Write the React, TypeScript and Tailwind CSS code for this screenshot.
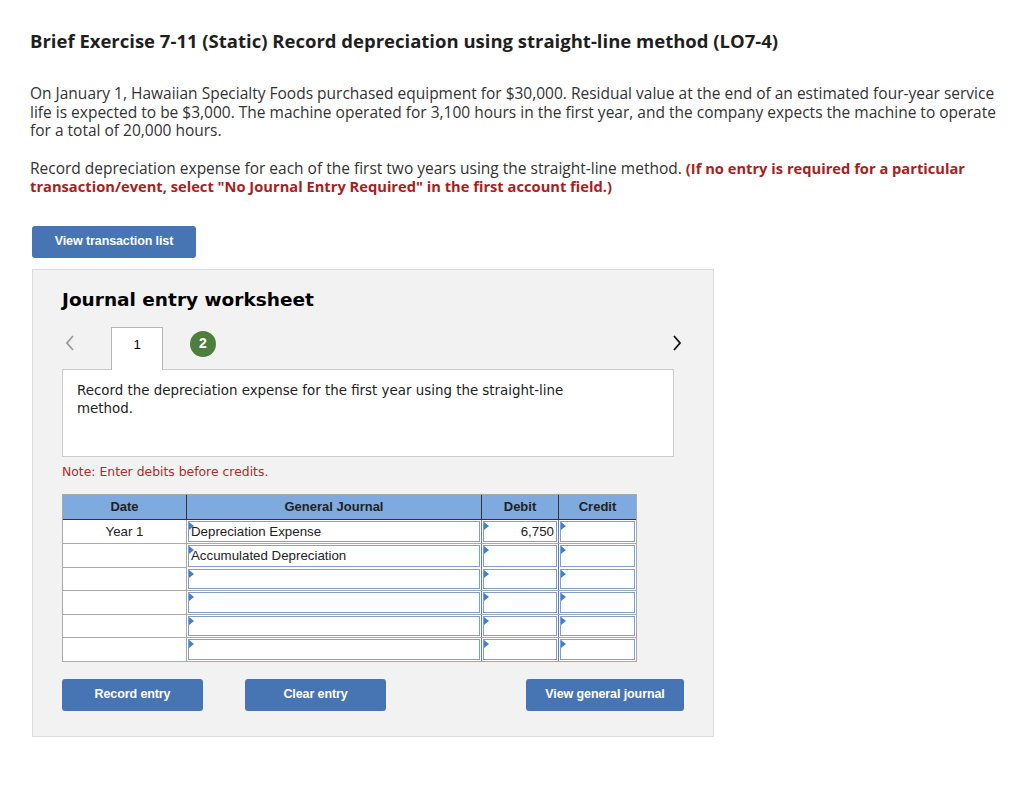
import React from "react"

const rows = [
  { date: "Year 1", account: "Depreciation Expense", debit: "6,750", credit: "" },
  { date: "", account: "Accumulated Depreciation", debit: "", credit: "" },
  { date: "", account: "", debit: "", credit: "" },
  { date: "", account: "", debit: "", credit: "" },
  { date: "", account: "", debit: "", credit: "" },
  { date: "", account: "", debit: "", credit: "" },
]

function InputCell({ value, align = "left" }: { value: string; align?: "left" | "right" }) {
  return (
    <div className="h-full p-[1px] bg-white">
      <div
        className={`relative h-full border border-[#7f9fcf] flex items-center px-[2px] ${
          align === "right" ? "justify-end" : "justify-start"
        }`}
      >
        {/* little blue marker in the corner */}
        <span className="absolute left-0 top-0 w-0 h-0 border-t-[4px] border-b-[4px] border-l-[5px] border-t-transparent border-b-transparent border-l-[#3f7fd6]" />
        <span className="text-[13.3px] text-[#222]">{value}</span>
      </div>
    </div>
  )
}

function BlueButton({ label, width }: { label: string; width: string }) {
  return (
    <button
      className={`${width} h-[32px] rounded-[3px] bg-[#4775b4] text-white text-[12.5px] font-bold tracking-[-0.1px]`}
      style={{ fontFamily: '"Liberation Sans", Arial, sans-serif' }}
    >
      {label}
    </button>
  )
}

export default function App() {
  return (
    <div className="min-h-[793px] bg-white text-[#333]" style={{ fontFamily: '"Open Sans", sans-serif' }}>
      <div className="pl-[30px] pt-[30px]">
        <h1 className="text-[18.5px] leading-[22px] font-bold text-[#1f1f1f]">
          Brief Exercise 7-11 (Static) Record depreciation using straight-line method (LO7-4)
        </h1>

        <p className="mt-[32px] text-[15.5px] leading-[18.5px] text-[#333]">
          On January 1, Hawaiian Specialty Foods purchased equipment for $30,000. Residual value at the end of an estimated four-year service
          <br />
          life is expected to be $3,000. The machine operated for 3,100 hours in the first year, and the company expects the machine to operate
          <br />
          for a total of 20,000 hours.
        </p>

        <p className="mt-[19px] text-[15.5px] leading-[18.5px] text-[#333]">
          Record depreciation expense for each of the first two years using the straight-line method.{" "}
          <span className="font-bold text-[#a81e1e] text-[14.7px]">
            (If no entry is required for a particular
            <br />
            transaction/event, select "No Journal Entry Required" in the first account field.)
          </span>
        </p>
      </div>

      <div className="pl-[32px]">
        <div className="mt-[30px]">
          <BlueButton label="View transaction list" width="w-[164px]" />
        </div>

        <div className="mt-[11px] w-[682px] h-[468px] bg-[#f2f2f2] border border-[#dadada] pl-[29px] pt-[18px]">
          <h2
            className="text-[18.5px] leading-[24px] font-bold text-black"
            style={{ fontFamily: '"DejaVu Sans", Verdana, sans-serif' }}
          >
            Journal entry worksheet
          </h2>

          <div className="mt-[15px] w-[612px] flex items-start">
            <div className="w-[49px] pl-[3px] pt-[8px]">
              <svg width="10" height="16" viewBox="0 0 10 16">
                <path d="M8 1 L2 8 L8 15" fill="none" stroke="#9a9a9a" strokeWidth="1.8" />
              </svg>
            </div>
            <div className="relative z-10 w-[52px] h-[43px] -mb-[1px] bg-white border border-b-0 border-[#b5b5b5] flex justify-center pt-[7px]">
              <span className="text-[13px] text-black" style={{ fontFamily: '"Liberation Sans", Arial, sans-serif' }}>
                1
              </span>
            </div>
            <div
              className="ml-[27px] mt-[4px] w-[26px] h-[26px] rounded-full bg-[#4e7e3d] text-white text-[14px] font-bold flex items-center justify-center"
              style={{ fontFamily: '"Liberation Sans", Arial, sans-serif' }}
            >
              2
            </div>
            <div className="ml-auto -mr-[8px] pt-[8px]">
              <svg width="10" height="16" viewBox="0 0 10 16">
                <path d="M2 1 L8 8 L2 15" fill="none" stroke="#111" strokeWidth="1.8" />
              </svg>
            </div>
          </div>

          <div
            className="w-[612px] h-[88px] bg-white border border-[#cccccc] pl-[14px] pt-[12px] text-[13.4px] leading-[18px] text-[#222]"
            style={{ fontFamily: '"DejaVu Sans", Verdana, sans-serif' }}
          >
            Record the depreciation expense for the first year using the straight-line
            <br />
            method.
          </div>

          <p
            className="mt-[7px] text-[12.4px] leading-[16px] text-[#b22a2a]"
            style={{ fontFamily: '"DejaVu Sans", Verdana, sans-serif' }}
          >
            Note: Enter debits before credits.
          </p>

          <div
            className="mt-[14px] w-[575px] border border-[#a9a9a9] bg-white"
            style={{ fontFamily: '"Liberation Sans", Arial, sans-serif' }}
          >
            <div className="grid grid-cols-[124px_295px_77px_77px] h-[25px] bg-[#7eaadf] border-b border-[#333] text-[13px] font-bold text-[#222]">
              <div className="flex items-center justify-center border-r border-[#333]">Date</div>
              <div className="flex items-center justify-center border-r border-[#333]">General Journal</div>
              <div className="flex items-center justify-center border-r border-[#333]">Debit</div>
              <div className="flex items-center justify-center">Credit</div>
            </div>
            {rows.map((row, i) => (
              <div
                key={i}
                className={`grid grid-cols-[124px_295px_77px_77px] h-[23.5px] ${i > 0 ? "border-t border-[#a9a9a9]" : ""}`}
              >
                <div className="flex items-center justify-center border-r border-[#a9a9a9] text-[13.3px] text-[#222]">
                  {row.date}
                </div>
                <div className="border-r border-[#5b7fb8]">
                  <InputCell value={row.account} />
                </div>
                <div className="border-r border-[#5b7fb8]">
                  <InputCell value={row.debit} align="right" />
                </div>
                <div>
                  <InputCell value={row.credit} />
                </div>
              </div>
            ))}
          </div>

          <div className="mt-[17px] w-[622px] flex items-center">
            <BlueButton label="Record entry" width="w-[141px]" />
            <div className="ml-[42px]">
              <BlueButton label="Clear entry" width="w-[141px]" />
            </div>
            <div className="ml-auto">
              <BlueButton label="View general journal" width="w-[158px]" />
            </div>
          </div>
        </div>
      </div>
    </div>
  )
}
